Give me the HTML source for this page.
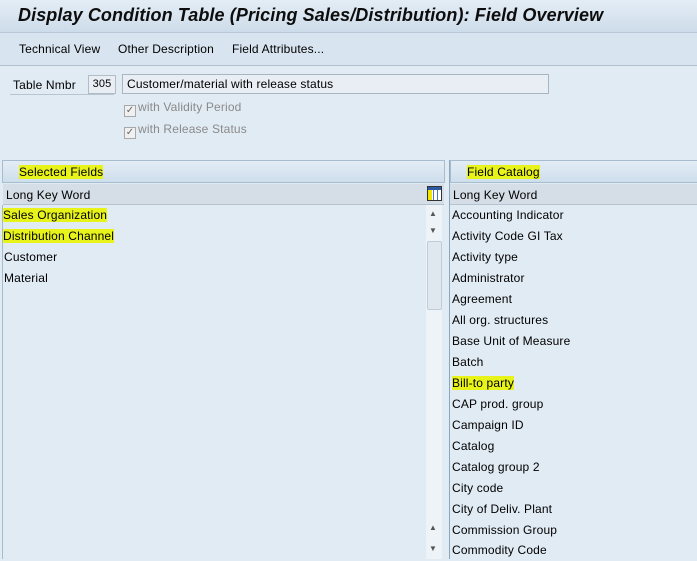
<!DOCTYPE html><html><head><style>
body{margin:0;width:697px;height:559px;overflow:hidden;background:#e1ebf4;font-family:"Liberation Sans",Tahoma,sans-serif;font-size:12px;color:#000;position:relative;letter-spacing:0.15px}
.a{position:absolute}
.title{left:0;top:0;width:697px;height:32px;background:linear-gradient(#e4edf5,#cddcea);border-bottom:1px solid #b8c8d8}
.title span{position:absolute;left:18px;top:5px;font-size:18px;font-weight:bold;font-style:italic;color:#0d0d0d;letter-spacing:0.1px}
.tb{left:0;top:33px;width:697px;height:32px;background:#d8e4ef;border-bottom:1px solid #b0bfcd}
.tb span{position:absolute;top:9px}
.hl{background:#e8f31a}
.ph{height:21px;background:linear-gradient(#e3edf6,#cfdeec);border:1px solid #a8bccf}
.ch{height:20px;background:#d5dde6;border-bottom:1px solid #b5c2cf}
.row{position:absolute;height:21px;line-height:21px}
.cb{display:inline-block;width:10px;height:10px;border:1px solid #a8a8a8;background:#f0f0f0;vertical-align:-2px;margin-right:2px;font-size:10px;line-height:10px;text-align:center;color:#666}
</style></head><body>
<div class="a title"><span>Display Condition Table (Pricing Sales/Distribution): Field Overview</span></div>
<div class="a tb"><span style="left:19px">Technical View</span><span style="left:118px">Other Description</span><span style="left:232px">Field Attributes...</span></div>
<div class="a" style="left:13px;top:78px">Table Nmbr</div>
<div class="a" style="left:10px;top:94px;width:104px;border-top:1px solid #b8c4d0"></div>
<div class="a" style="left:88px;top:75px;width:26px;height:17px;border:1px solid #b0bcc8;background:#e8eef4;line-height:17px;text-align:center;font-size:11px">305</div>
<div class="a" style="left:122px;top:74px;width:427px;height:20px;border:1px solid #a9b5c1;background:#e8eef4;line-height:18px;padding-left:4px;box-sizing:border-box">Customer/material with release status</div>
<div class="a" style="left:124px;top:100px;color:#8a8a8a"><span class="cb">✓</span>with Validity Period</div>
<div class="a" style="left:124px;top:122px;color:#8a8a8a"><span class="cb">✓</span>with Release Status</div>
<div class="a ph" style="left:2px;top:160px;width:441px"><span class="a hl" style="left:16px;top:4px">Selected Fields</span></div>
<div class="a ch" style="left:3px;top:184px;width:441px"><span class="a" style="left:3px;top:4px">Long Key Word</span>
<div class="a" style="left:424px;top:2px;width:13px;height:13px;border:1px solid #333;background:linear-gradient(90deg,#f2e500 0 4px,#fff 4px 5px,#4a7ac0 5px 6px,#fff 6px 9px,#4a7ac0 9px 10px,#fff 10px)"><div style="height:3px;background:#2c5aa0"></div></div></div>
<div class="a" style="left:2px;top:205px;width:1px;height:354px;background:#a8bccf"></div>
<div class="row" style="left:3px;top:205px"><span class="hl">Sales Organization</span></div>
<div class="row" style="left:3px;top:226px"><span class="hl">Distribution Channel</span></div>
<div class="row" style="left:4px;top:247px">Customer</div>
<div class="row" style="left:4px;top:268px">Material</div>
<div class="a" style="left:426px;top:205px;width:16px;height:354px;background:#eef3f8"></div>
<div class="a" style="left:429px;top:209px;color:#555;font-size:8px">▲</div>
<div class="a" style="left:429px;top:226px;color:#555;font-size:8px">▼</div>
<div class="a" style="left:427px;top:241px;width:13px;height:67px;background:#dfe7ef;border:1px solid #c0ccd8;border-radius:2px"></div>
<div class="a" style="left:429px;top:523px;color:#555;font-size:8px">▲</div>
<div class="a" style="left:429px;top:544px;color:#555;font-size:8px">▼</div>
<div class="a ph" style="left:450px;top:160px;width:250px"><span class="a hl" style="left:16px;top:4px">Field Catalog</span></div>
<div class="a ch" style="left:450px;top:184px;width:247px"><span class="a" style="left:3px;top:4px">Long Key Word</span></div>
<div class="a" style="left:449px;top:160px;width:1px;height:399px;background:#8fa5ba"></div>
<div class="row" style="left:452px;top:205px">Accounting Indicator</div>
<div class="row" style="left:452px;top:226px">Activity Code GI Tax</div>
<div class="row" style="left:452px;top:247px">Activity type</div>
<div class="row" style="left:452px;top:268px">Administrator</div>
<div class="row" style="left:452px;top:289px">Agreement</div>
<div class="row" style="left:452px;top:310px">All org. structures</div>
<div class="row" style="left:452px;top:331px">Base Unit of Measure</div>
<div class="row" style="left:452px;top:352px">Batch</div>
<div class="row" style="left:452px;top:373px"><span class="hl">Bill-to party</span></div>
<div class="row" style="left:452px;top:394px">CAP prod. group</div>
<div class="row" style="left:452px;top:415px">Campaign ID</div>
<div class="row" style="left:452px;top:436px">Catalog</div>
<div class="row" style="left:452px;top:457px">Catalog group 2</div>
<div class="row" style="left:452px;top:478px">City code</div>
<div class="row" style="left:452px;top:499px">City of Deliv. Plant</div>
<div class="row" style="left:452px;top:520px">Commission Group</div>
<div class="row" style="left:452px;top:540px">Commodity Code</div>
</body></html>
